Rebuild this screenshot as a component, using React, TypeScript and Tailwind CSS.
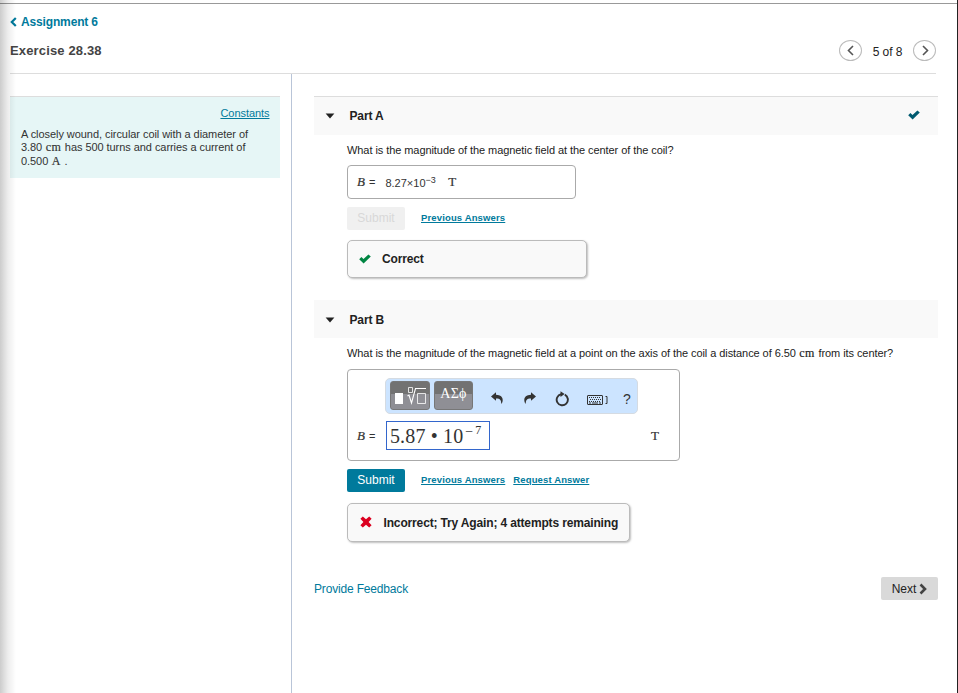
import { useState } from 'react'
import type { ReactNode } from 'react'

function CheckIcon({ className }: { className: string }) {
    return (
        <svg viewBox="0 0 12 10" className={className} fill="currentColor">
            <path d="M0.2 5.2 2.4 3 4.5 5 9.4 0.4 11.8 2.6 4.6 9.6Z" />
        </svg>
    )
}

function CrossIcon({ className }: { className: string }) {
    return (
        <svg viewBox="0 0 12 12" className={className} fill="currentColor">
            <path d="M0.4 2.7 2.8 0.4 6 3.3 9.2 0.4 11.6 2.7 8.6 6 11.6 9.3 9.2 11.6 6 8.7 2.8 11.6 0.4 9.3 3.4 6Z" />
        </svg>
    )
}

function ReplyArrow({ className }: { className: string }) {
    return (
        <svg viewBox="0 0 12 12" className={className} fill="currentColor">
            <path d="M0 4.4 5 0.2V2.7C9.6 2.8 11.8 5 11.7 8.2 11.7 9.7 11 11.2 10.2 12 10.4 8.4 9.5 6.4 5 6.4V8.7Z" />
        </svg>
    )
}

function PartHeader({ title, className, children }: { title: string; className: string; children?: ReactNode }) {
    return (
        <div className={`flex items-center bg-[#f9f9f9] pl-[11px] pr-[18px] ${className}`}>
            <svg viewBox="0 0 10 6" className="mr-[14.5px] h-[6px] w-[10px]">
                <path d="M0.6 0.5h8.8L5 5.5Z" fill="#222" />
            </svg>
            <h2 className="flex-1 text-[12px] font-bold tracking-[-0.15px] text-[#222]">{title}</h2>
            {children}
        </div>
    )
}

function TextLink({ children }: { children: ReactNode }) {
    return (
        <a href="#" className="block text-[9.5px] leading-[14px] font-bold tracking-[0.14px] whitespace-nowrap text-[#007a9c] underline underline-offset-1">
            {children}
        </a>
    )
}

function Unit({ children }: { children: ReactNode }) {
    return <span className="mx-[0.5px] font-['Liberation_Serif',serif] text-[12px] leading-none tracking-[0.5px] [-webkit-text-stroke:0.2px_currentColor]">{children}</span>
}

export default function App() {
    const [answer] = useState({ base: '5.87 • 10', minus: '−', exponent: '7' })

    return (
        <div className="relative flex h-[693px] w-[958px] flex-col overflow-hidden border-r border-[#222] bg-white pt-[3px] font-['Liberation_Sans',Arial,sans-serif] text-[#222]">
            {/* Header */}
            <header className="flex h-[71px] shrink-0 flex-col border-t border-[#999] pl-[10px]">
                <div className="mr-[21px] flex flex-1 justify-between border-b border-[#ddd]">
                    <div className="pt-[10px]">
                        <a href="#" className="flex items-center text-[12px] leading-[16px] font-bold tracking-[-0.15px] text-[#007a9c]">
                            <svg viewBox="0 0 7 10" className="mr-1 h-[10px] w-[7px]" fill="none" stroke="currentColor" strokeWidth="2.2">
                                <path d="M5.8 1 1.8 5l4 4" />
                            </svg>
                            Assignment 6
                        </a>
                        <h1 className="mt-[13px] text-[13px] leading-[16px] font-bold tracking-[0.15px] text-[#444]">Exercise 28.38</h1>
                    </div>
                    <div className="mt-[35px] flex h-[23px] items-center">
                        <button className="flex h-[21px] w-[23px] items-center justify-center rounded-[50%] border border-[#bbb]">
                            <svg viewBox="0 0 7 11" className="h-[11px] w-[7px]" fill="none" stroke="#555" strokeWidth="1.6">
                                <path d="M6 1 1.5 5.5 6 10" />
                            </svg>
                        </button>
                        <span className="w-[51px] pt-[2px] text-center text-[12px] leading-[14px] tracking-[-0.1px]">5 of 8</span>
                        <button className="flex h-[21px] w-[23px] items-center justify-center rounded-[50%] border border-[#bbb]">
                            <svg viewBox="0 0 7 11" className="ml-[2px] h-[11px] w-[7px]" fill="none" stroke="#555" strokeWidth="1.6">
                                <path d="M1 1 5.5 5.5 1 10" />
                            </svg>
                        </button>
                    </div>
                </div>
            </header>

            <div className="flex flex-1">
                {/* Problem statement */}
                <aside className="w-[292px] border-r border-[#b9c5d8] pt-[22px] pl-[10px]">
                    <div className="h-[82px] w-[270px] border-t border-[#ddd] bg-[#e6f6f6] pt-[9px] pr-[10.5px] pl-[11px]">
                        <div className="text-right text-[11px] leading-[14px] tracking-[-0.05px]">
                            <a href="#" className="text-[#007a9c] underline underline-offset-1">Constants</a>
                        </div>
                        <p className="mt-[8px] text-[11px] leading-[13.3px] tracking-[-0.06px] whitespace-nowrap text-[#333]">
                            A closely wound, circular coil with a diameter of
                            <br />
                            3.80 <Unit>cm</Unit> has 500 turns and carries a current of
                            <br />
                            0.500 <Unit>A</Unit> .
                        </p>
                    </div>
                </aside>

                <main className="w-[646px] pt-[22px] pl-[22px]">
                    {/* Part A */}
                    <PartHeader title="Part A" className="h-[39px] border-t border-[#ddd]">
                        <CheckIcon className="mb-[2px] h-[10px] w-[12px] text-[#005a70]" />
                    </PartHeader>
                    <section className="h-[165px] pt-[8px] pl-[33px]">
                        <p className="text-[11px] leading-[14px] tracking-[-0.07px]">What is the magnitude of the magnetic field at the center of the coil?</p>
                        <div className="mt-[8px] flex h-[34px] w-[229px] items-center rounded-[4px] border border-[#aaa] pl-[9px] text-[11px] text-[#333]">
                            <span className="w-[9px] font-['Liberation_Serif',serif] text-[13px] italic [-webkit-text-stroke:0.2px_currentColor]">B</span>
                            <span className="ml-[3px] pt-[1px] text-[11px]">=</span>
                            <span className="ml-[10px] pt-[2px]">
                                8.27×10<span className="relative -top-[4px] text-[9px]">−3</span>
                            </span>
                            <span className="ml-[12.5px] font-['Liberation_Serif',serif] text-[13px] [-webkit-text-stroke:0.2px_currentColor]">T</span>
                        </div>
                        <div className="mt-[8px] flex items-start">
                            <button disabled className="h-[23px] w-[58px] rounded-[2px] bg-[#f0f0f0] pb-[2px] text-[12px] text-[#d8d8d8]">Submit</button>
                            <div className="ml-[16px] pt-[4px]">
                                <TextLink>Previous Answers</TextLink>
                            </div>
                        </div>
                        <div className="mt-[10px] flex h-[38px] w-[240px] items-center rounded-[5px] border border-[#bbb] bg-[#f9f9f9] pl-[11px] text-[12px] font-bold tracking-[-0.15px] shadow-[1px_1px_2px_rgba(0,0,0,0.25)]">
                            <CheckIcon className="mr-[11px] mb-[1px] h-[10px] w-[12px] text-[#008542]" />
                            Correct
                        </div>
                    </section>

                    {/* Part B */}
                    <PartHeader title="Part B" className="h-[38px] pt-[1px]" />
                    <section className="pt-[8px] pl-[33px]">
                        <p className="text-[11px] leading-[14px] tracking-[-0.07px] whitespace-nowrap">
                            What is the magnitude of the magnetic field at a point on the axis of the coil a distance of 6.50 <Unit>cm</Unit> from its center?
                        </p>
                        <div className="mt-[9px] h-[92px] w-[333px] rounded-[4px] border border-[#aaa] pt-[8px] pl-[9px]">
                            <div className="ml-[28px] flex h-[36px] w-[253px] items-center rounded-[5px] border border-[#d5dbe2] bg-[#cce4ff] pl-[4px] text-[#333]">
                                <button className="mb-[1px] flex h-[29px] w-[40px] items-center justify-center rounded-[3px] border border-[#777] bg-linear-to-b from-[#727272] from-45% to-[#8f8f95] to-45%">
                                    <svg viewBox="0 0 34 20" className="mb-[2px] h-[20px] w-[34px]" fill="none" stroke="#fff">
                                        <path d="M2 8h8v11H2z" fill="#fff" stroke="none" />
                                        <path d="M15.5 2.5h4v5h-4zM24.5 8.5h8v10h-8z" strokeOpacity="0.8" />
                                        <path d="M14.5 11l1.5-1 2.5 8 4-14.5H33" strokeWidth="1.1" />
                                    </svg>
                                </button>
                                <button className="mb-[1px] ml-[4px] h-[29px] w-[39px] rounded-[3px] border border-[#777] bg-linear-to-b from-[#727272] from-45% to-[#8f8f95] to-45% pb-[5px] font-['Liberation_Serif',serif] text-[14px] tracking-[0.3px] text-white">
                                    ΑΣϕ
                                </button>
                                <ReplyArrow className="mt-[4px] ml-[18px] h-[12px] w-[12px]" />
                                <ReplyArrow className="mt-[4px] ml-[21px] h-[12px] w-[12px] -scale-x-100" />
                                <svg viewBox="0 0 14 16" className="mt-[5px] ml-[19px] h-[16px] w-[14px]" fill="none" stroke="currentColor" strokeWidth="1.9">
                                    <path d="M9.8 3.7A5.6 5.6 0 1 1 6.2 3.2" />
                                    <path d="M5.5 0.2 9.6 3 5.5 6Z" fill="currentColor" stroke="none" />
                                </svg>
                                <svg viewBox="0 0 22 11" className="mt-[9px] ml-[18px] h-[11px] w-[22px]" fill="none" stroke="currentColor">
                                    <rect x="0.5" y="0.5" width="15" height="9" rx="0.5" />
                                    <path d="M2 2.5h12M3 4.5h11M2 6.5h12" strokeDasharray="1 1" />
                                    <path d="M2 8h2M5 8h6M12 8h2" />
                                    <path d="M18.5 1.5h1.5v7h-1.5" />
                                </svg>
                                <span className="mt-[6px] ml-[14px] text-[14px]">?</span>
                            </div>
                            <div className="mt-[7px] flex h-[29px] items-center text-[11px] text-[#333]">
                                <span className="w-[9px] font-['Liberation_Serif',serif] text-[13px] italic [-webkit-text-stroke:0.2px_currentColor]">B</span>
                                <span className="ml-[3px] pt-[1px] text-[11px]">=</span>
                                <div className="ml-[10.5px] h-[29px] w-[104px] border border-[#3366cc] pl-[3px] font-['Liberation_Serif',serif] text-[20px] leading-[28px] tracking-[0.15px] whitespace-nowrap">
                                    {answer.base}
                                    <span className="relative -top-[7px] ml-[2px] text-[14px]">{answer.minus}</span>
                                    <span className="relative -top-[9px] ml-[2px] text-[12px]">{answer.exponent}</span>
                                </div>
                                <span className="ml-[161px] font-['Liberation_Serif',serif] text-[13px] [-webkit-text-stroke:0.2px_currentColor]">T</span>
                            </div>
                        </div>
                        <div className="mt-[8px] flex items-start">
                            <button className="h-[23px] w-[58px] rounded-[2px] bg-[#007a9c] pb-[2px] text-[12px] text-white">Submit</button>
                            <div className="ml-[16px] flex gap-[8px] pt-[4px]">
                                <TextLink>Previous Answers</TextLink>
                                <TextLink>Request Answer</TextLink>
                            </div>
                        </div>
                        <div className="mt-[11px] flex h-[39px] w-[283px] items-center rounded-[5px] border border-[#bbb] bg-[#f9f9f9] pl-[12px] text-[12px] font-bold tracking-[-0.15px] whitespace-nowrap shadow-[1px_1px_2px_rgba(0,0,0,0.25)]">
                            <CrossIcon className="mr-[11.5px] mb-[2px] h-[12px] w-[12px] text-[#db0020]" />
                            Incorrect; Try Again; 4 attempts remaining
                        </div>
                    </section>

                    <footer className="mt-[35px] flex items-center justify-between text-[12px]">
                        <a href="#" className="tracking-[-0.17px] text-[#007a9c]">Provide Feedback</a>
                        <button className="flex h-[23px] w-[57px] items-center justify-center rounded-[2px] bg-[#d9d9d9]">
                            Next
                            <svg viewBox="0 0 8 12" className="ml-[3px] h-[12px] w-[8px]" fill="none" stroke="#444" strokeWidth="2.6">
                                <path d="M1.5 1.5 6 6l-4.5 4.5" />
                            </svg>
                        </button>
                    </footer>
                </main>
            </div>

            {/* Shadow along the left edge */}
            <div className="pointer-events-none absolute top-0 left-0 h-full w-[16px] bg-linear-to-r from-black/20 via-black/7 to-transparent" />
        </div>
    )
}
